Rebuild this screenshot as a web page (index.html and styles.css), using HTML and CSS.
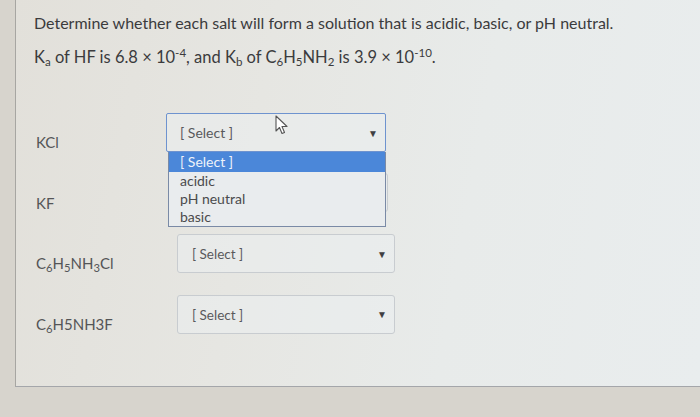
FILE: index.html
```html
<!DOCTYPE html>
<html>
<head>
<meta charset="utf-8">
<link rel="stylesheet" href="styles.css">
</head>
<body>
<div class="panel">
  <p class="q q1">Determine whether each salt will form a solution that is acidic, basic, or pH neutral.</p>
  <p class="q q2">K<sub>a</sub> of HF is 6.8 × 10<sup>-4</sup>, and K<sub>b</sub> of C<sub>6</sub>H<sub>5</sub>NH<sub>2</sub> is 3.9 × 10<sup>-10</sup>.</p>
  <div class="rows">
    <div class="row r1">
      <div class="label">KCl</div>
      <div class="selwrap">
        <div class="select open"><span>[ Select ]</span><span class="arrow">▼</span></div>
        <ul class="menu">
          <li class="hl">[ Select ]</li>
          <li>acidic</li>
          <li>pH neutral</li>
          <li>basic</li>
        </ul>
        <svg class="cursor" width="14" height="20" viewBox="0 0 14 20"><path d="M1 1 L1 16 L4.5 12.5 L7 18.5 L9.5 17.5 L7 11.5 L12 11.5 Z" fill="#fff" stroke="#555" stroke-width="1.1" stroke-linejoin="round"/></svg>
      </div>
    </div>
    <div class="row r2">
      <div class="label">KF</div>
      <div class="select plain"></div>
    </div>
    <div class="row r3">
      <div class="label">C<sub>6</sub>H<sub>5</sub>NH<sub>3</sub>Cl</div>
      <div class="select plain"><span>[ Select ]</span><span class="arrow">▼</span></div>
    </div>
    <div class="row r4">
      <div class="label">C<sub>6</sub>H5NH3F</div>
      <div class="select plain"><span>[ Select ]</span><span class="arrow">▼</span></div>
    </div>
  </div>
</div>
</body>
</html>
```
FILE: styles.css
```css
html, body {
  margin: 0;
  padding: 0;
}
body {
  width: 700px;
  height: 417px;
  overflow: hidden;
  background: #d7d4cd;
  font-family: Lato, "Open Sans", sans-serif;
}
.panel {
  margin-left: 15px;
  height: 373px;
  padding-top: 13px;
  border-left: 1px solid #a7a6a2;
  border-bottom: 1px solid #a4a6aa;
  background: linear-gradient(100deg, #e2e0da 0%, #e6e6e2 35%, #e8ebea 65%, #e9edee 100%);
}
.q {
  margin: 0 0 0 18px;
  color: #3b3b3d;
  font-size: 16px;
  line-height: 20px;
}
.q2 {
  margin-top: 14px;
  font-size: 16.5px;
}
sub {
  font-size: 0.7em;
  vertical-align: -0.25em;
  line-height: 0;
}
sup {
  font-size: 0.7em;
  vertical-align: 0.5em;
  line-height: 0;
}
.rows {
  margin-top: 46px;
}
.row {
  display: flex;
  align-items: flex-start;
  height: 60.5px;
}
.label {
  width: 130px;
  padding-left: 20px;
  padding-top: 20px;
  color: #545557;
  font-size: 15px;
}
.label sub {
  font-size: 0.75em;
}
.selwrap {
  position: relative;
}
.select {
  box-sizing: border-box;
  width: 220px;
  height: 39px;
  display: flex;
  align-items: center;
  justify-content: space-between;
  padding: 0 7px 0 13px;
  font-size: 14px;
  color: #59595c;
  background: rgba(236, 240, 242, 0.5);
}
.select.open {
  border: 1px solid #6e93cf;
  border-radius: 2px;
}
.select.plain {
  border: 1px solid #c8ccd0;
  border-radius: 3px;
}
.r2 .select {
  margin-left: 10px;
  margin-top: -1px;
  width: 212px;
}
.r3 .select, .r4 .select {
  margin-left: 11px;
  width: 218px;
  padding-left: 14px;
  font-size: 13.5px;
}
.r3 .select span:first-child, .r4 .select span:first-child {
  margin-top: 1px;
}
.arrow {
  font-size: 10px;
  color: #3f3f42;
}
.menu {
  position: absolute;
  left: 2px;
  top: 39px;
  width: 218px;
  box-sizing: border-box;
  margin: 0;
  padding: 0;
  list-style: none;
  border: 1px solid #7a8aa6;
  border-top: none;
  background: #e9ecee;
  z-index: 2;
}
.menu li {
  height: 18px;
  line-height: 18px;
  padding-left: 11px;
  font-size: 14px;
  color: #4a4a4c;
}
.menu li.hl {
  height: 20px;
  line-height: 20px;
  background: #4b87d9;
  color: #eef3fa;
}
.cursor {
  position: absolute;
  left: 109px;
  top: 2px;
  z-index: 3;
}
```
